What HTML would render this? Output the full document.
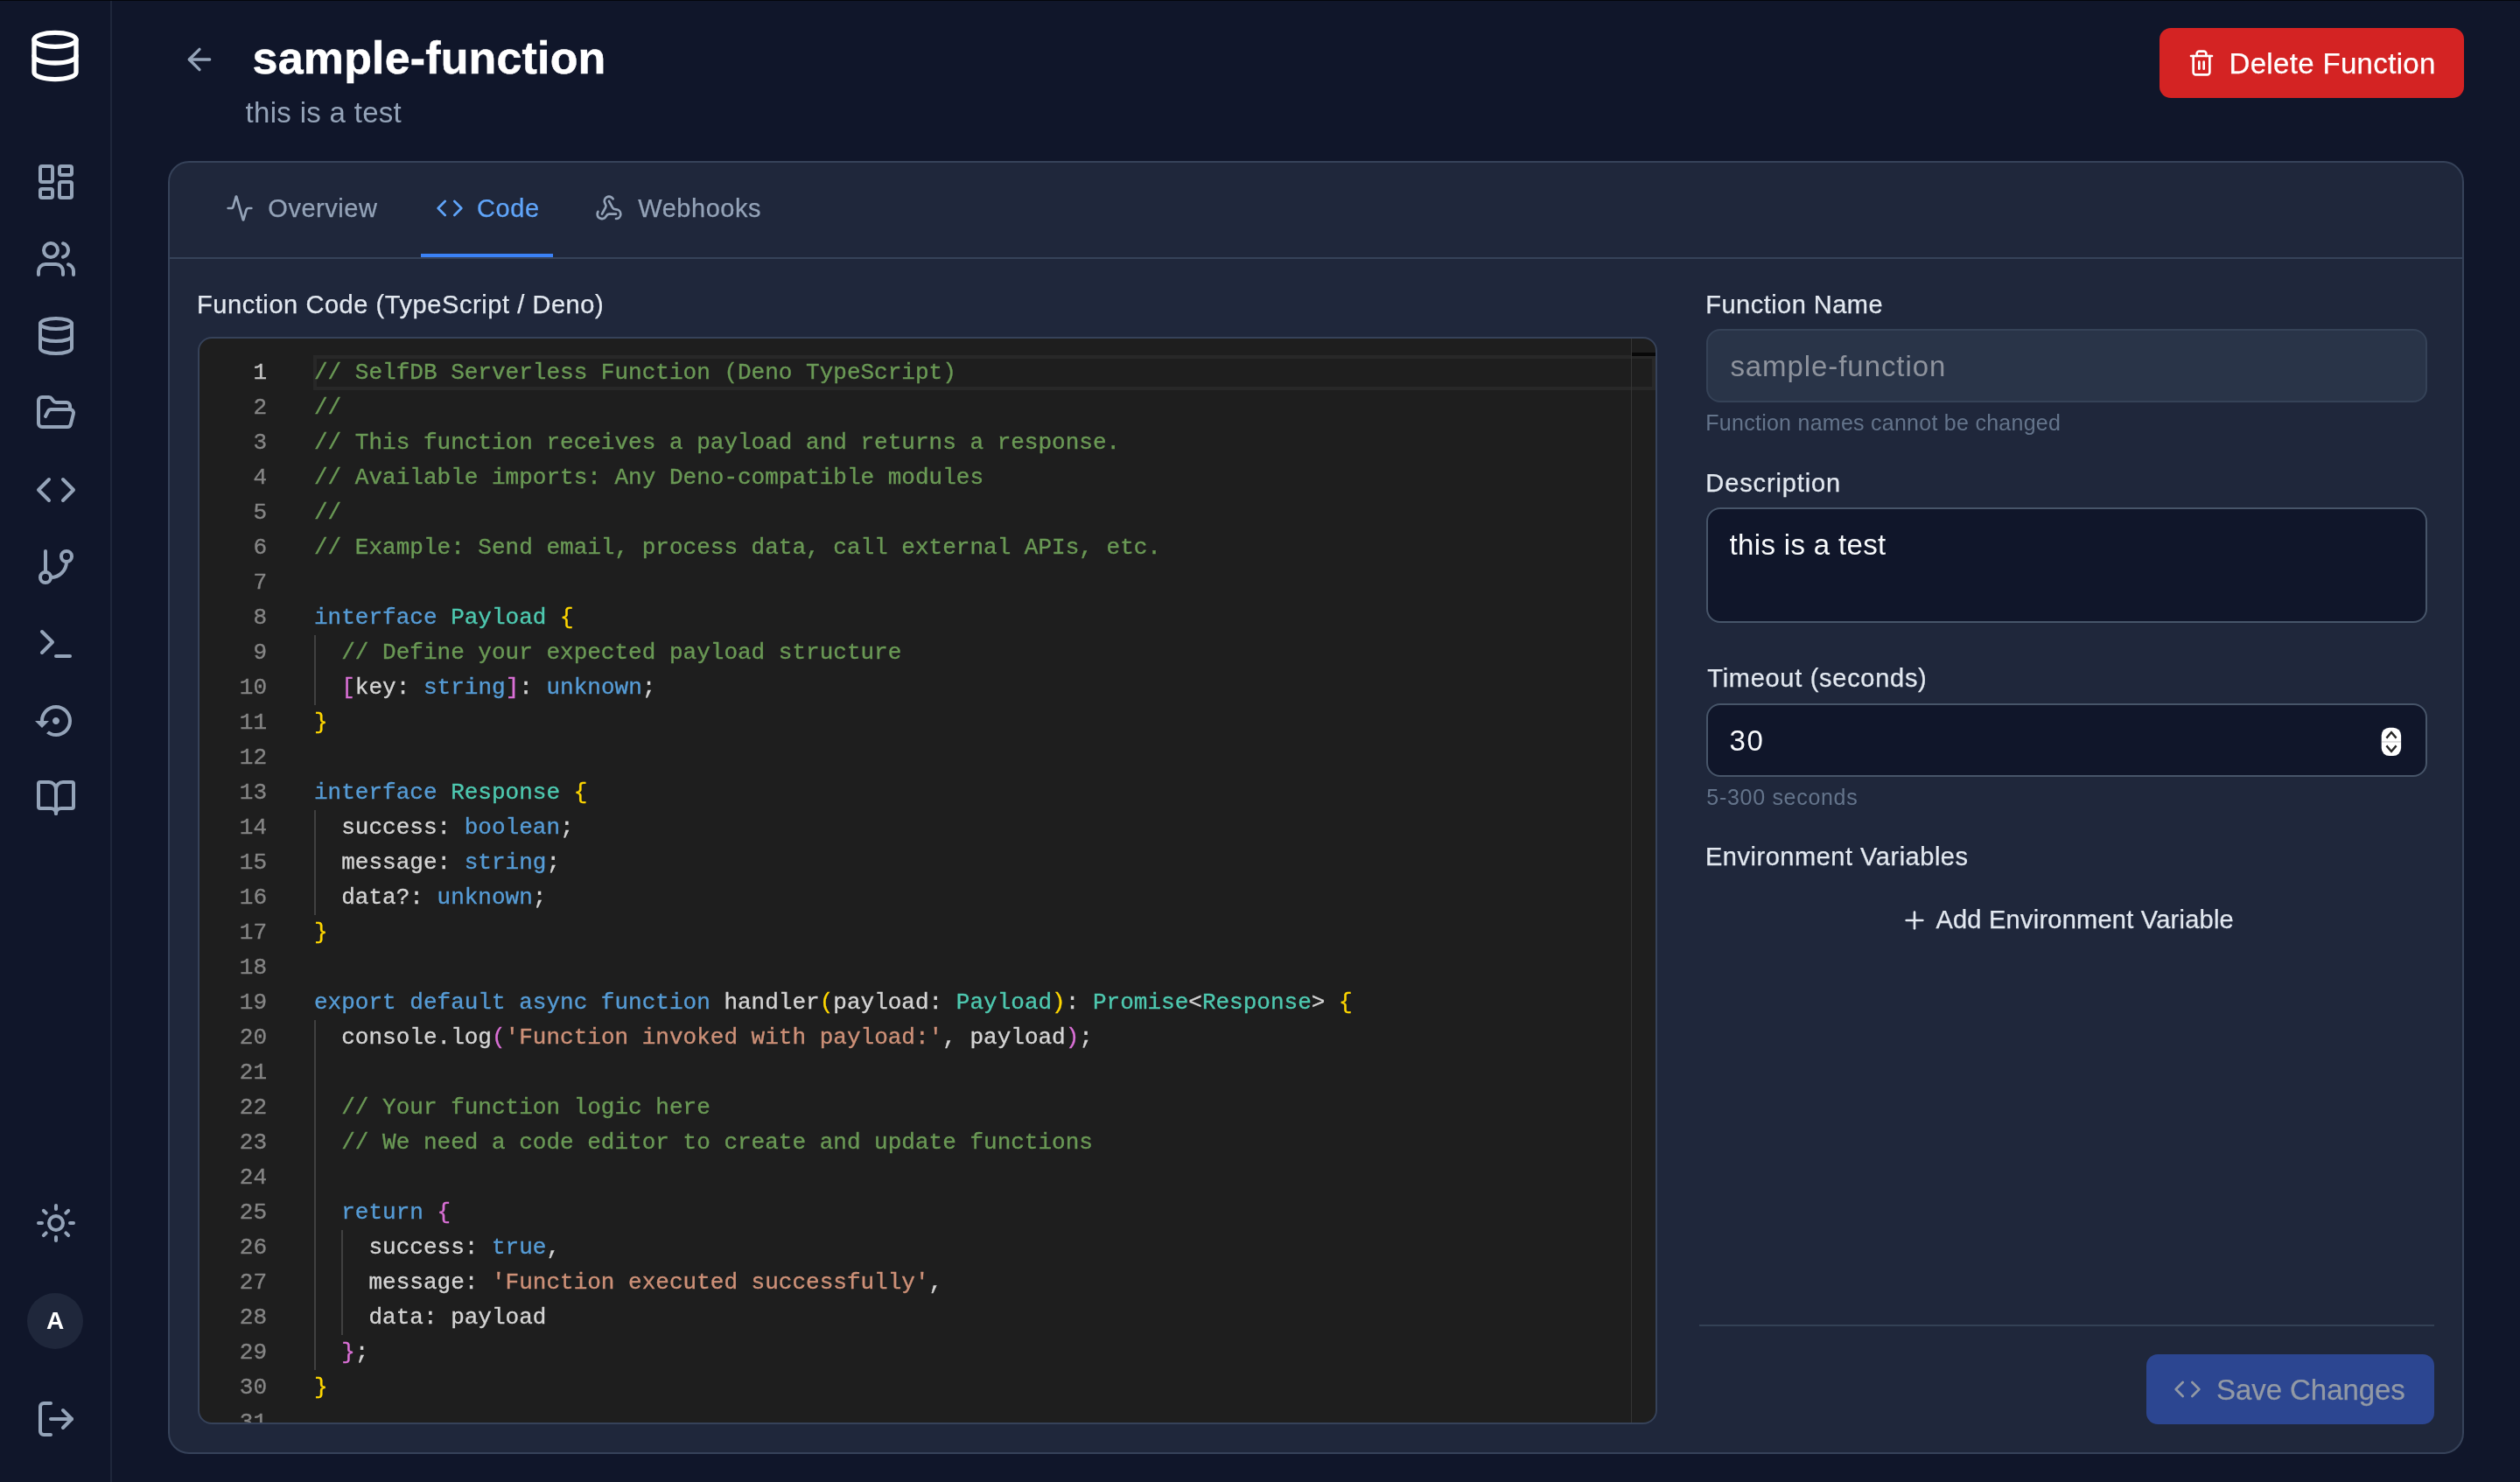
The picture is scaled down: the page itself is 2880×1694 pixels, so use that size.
<!DOCTYPE html>
<html><head><meta charset="utf-8"><title>sample-function</title>
<style>
*{box-sizing:border-box;margin:0;padding:0}
html,body{width:2880px;height:1694px;overflow:hidden;background:#10162a}
body{position:relative;font-family:"Liberation Sans",sans-serif;color:#e2e8f0}
.abs{position:absolute}
.t{position:absolute;white-space:nowrap;line-height:1}
#root{position:absolute;left:0;top:0;width:2880px;height:1694px;will-change:transform}
#topline{position:absolute;left:0;top:0;width:2880px;height:1px;background:#04060c}
#sidebar{position:absolute;left:0;top:0;width:128px;height:1694px;border-right:2px solid #1f273b}
.avatar{position:absolute;left:31px;top:1478px;width:64px;height:64px;border-radius:50%;background:#1f273b;color:#fff;
  font-weight:bold;font-size:28px;line-height:64px;text-align:center}
#card{position:absolute;left:192px;top:184px;width:2624px;height:1478px;border:2px solid #364259;border-radius:24px;background:#1f273b}
#tabline{position:absolute;left:194px;top:294px;width:2620px;height:2px;background:#364259}
#tabul{position:absolute;left:481px;top:290px;width:151px;height:4px;background:#3b82f6}
.tab{font-size:28px;color:#94a3b8;font-weight:500}
#del{position:absolute;left:2468px;top:32px;width:348px;height:80px;border-radius:13px;background:#d42323}
#save{position:absolute;left:2453px;top:1548px;width:329px;height:80px;border-radius:13px;background:#2c4691}
.lbl{font-size:28px;color:#e2e8f0}
.hint{font-size:24px;color:#64748b}
.inp{position:absolute;left:1950px;width:824px;border:2px solid #475569;border-radius:16px;background:#10162a}
#editor{position:absolute;left:226px;top:385px;width:1668px;height:1243px;border:2px solid #364259;border-radius:16px;background:#1e1e1e;overflow:hidden}
#lines{position:absolute;left:0;top:19px;width:1664px;height:1240px;font-family:"Liberation Mono",monospace;font-size:26px;letter-spacing:0.01px;-webkit-text-stroke:0.35px currentColor}
.ln{position:absolute;left:0;width:77px;text-align:right;line-height:40px;height:40px;color:#858585;white-space:pre}
.ln.a{color:#c6c6c6}
.cl{position:absolute;left:131px;line-height:40px;height:40px;white-space:pre;color:#d4d4d4}
.c{color:#6a9955}.k{color:#569cd6}.t2{color:#4ec9b0}.s{color:#ce9178}.p{color:#d4d4d4}
.cl .t{position:static;color:#4ec9b0}
.b1{color:#ffd700}.b2{color:#da70d6}
.guide{position:absolute;width:2px;background:#404040}
</style></head>
<body>
<div id="root">
<div id="sidebar">
<svg style="position:absolute;left:31px;top:32px;" width="64" height="64" viewBox="0 0 24 24" fill="none" stroke="#ffffff" stroke-width="2" stroke-linecap="round" stroke-linejoin="round"><ellipse cx="12" cy="5" rx="9" ry="3"/><path d="M3 5V19A9 3 0 0 0 21 19V5"/><path d="M3 12A9 3 0 0 0 21 12"/></svg><svg style="position:absolute;left:40px;top:184px;" width="48" height="48" viewBox="0 0 24 24" fill="none" stroke="#94a3b8" stroke-width="2" stroke-linecap="round" stroke-linejoin="round"><rect width="7" height="9" x="3" y="3" rx="1"/><rect width="7" height="5" x="14" y="3" rx="1"/><rect width="7" height="9" x="14" y="12" rx="1"/><rect width="7" height="5" x="3" y="16" rx="1"/></svg><svg style="position:absolute;left:40px;top:272px;" width="48" height="48" viewBox="0 0 24 24" fill="none" stroke="#94a3b8" stroke-width="2" stroke-linecap="round" stroke-linejoin="round"><path d="M16 21v-2a4 4 0 0 0-4-4H6a4 4 0 0 0-4 4v2"/><circle cx="9" cy="7" r="4"/><path d="M22 21v-2a4 4 0 0 0-3-3.87"/><path d="M16 3.13a4 4 0 0 1 0 7.75"/></svg><svg style="position:absolute;left:40px;top:360px;" width="48" height="48" viewBox="0 0 24 24" fill="none" stroke="#94a3b8" stroke-width="2" stroke-linecap="round" stroke-linejoin="round"><ellipse cx="12" cy="5" rx="9" ry="3"/><path d="M3 5V19A9 3 0 0 0 21 19V5"/><path d="M3 12A9 3 0 0 0 21 12"/></svg><svg style="position:absolute;left:40px;top:448px;" width="48" height="48" viewBox="0 0 24 24" fill="none" stroke="#94a3b8" stroke-width="2" stroke-linecap="round" stroke-linejoin="round"><path d="m6 14 1.5-2.9A2 2 0 0 1 9.24 10H20a2 2 0 0 1 1.94 2.5l-1.54 6a2 2 0 0 1-1.95 1.5H4a2 2 0 0 1-2-2V5a2 2 0 0 1 2-2h3.9a2 2 0 0 1 1.69.9l.81 1.2a2 2 0 0 0 1.67.9H18a2 2 0 0 1 2 2v2"/></svg><svg style="position:absolute;left:40px;top:536px;" width="48" height="48" viewBox="0 0 24 24" fill="none" stroke="#94a3b8" stroke-width="2" stroke-linecap="round" stroke-linejoin="round"><polyline points="16 18 22 12 16 6"/><polyline points="8 6 2 12 8 18"/></svg><svg style="position:absolute;left:40px;top:624px;" width="48" height="48" viewBox="0 0 24 24" fill="none" stroke="#94a3b8" stroke-width="2" stroke-linecap="round" stroke-linejoin="round"><line x1="6" x2="6" y1="3" y2="15"/><circle cx="18" cy="6" r="3"/><circle cx="6" cy="18" r="3"/><path d="M18 9a9 9 0 0 1-9 9"/></svg><svg style="position:absolute;left:40px;top:712px;" width="48" height="48" viewBox="0 0 24 24" fill="none" stroke="#94a3b8" stroke-width="2" stroke-linecap="round" stroke-linejoin="round"><polyline points="4 17 10 11 4 5"/><line x1="12" x2="20" y1="19" y2="19"/></svg><svg style="position:absolute;left:40px;top:800px" width="48" height="48" viewBox="0 0 24 24" fill="#94a3b8"><path d="M14 12c0-1.1-.9-2-2-2s-2 .9-2 2 .9 2 2 2 2-.9 2-2zm-2-9c-4.97 0-9 4.03-9 9H0l4 4 4-4H5c0-3.87 3.13-7 7-7s7 3.13 7 7-3.13 7-7 7c-1.51 0-2.91-.49-4.06-1.3l-1.42 1.44C8.04 20.3 9.94 21 12 21c4.97 0 9-4.03 9-9s-4.03-9-9-9z"/></svg><svg style="position:absolute;left:40px;top:888px;" width="48" height="48" viewBox="0 0 24 24" fill="none" stroke="#94a3b8" stroke-width="2" stroke-linecap="round" stroke-linejoin="round"><path d="M12 7v14"/><path d="M3 18a1 1 0 0 1-1-1V4a1 1 0 0 1 1-1h5a4 4 0 0 1 4 4 4 4 0 0 1 4-4h5a1 1 0 0 1 1 1v13a1 1 0 0 1-1 1h-6a3 3 0 0 0-3 3 3 3 0 0 0-3-3z"/></svg><svg style="position:absolute;left:40px;top:1374px;" width="48" height="48" viewBox="0 0 24 24" fill="none" stroke="#94a3b8" stroke-width="2" stroke-linecap="round" stroke-linejoin="round"><circle cx="12" cy="12" r="4"/><path d="M12 2v2"/><path d="M12 20v2"/><path d="m4.93 4.93 1.41 1.41"/><path d="m17.66 17.66 1.41 1.41"/><path d="M2 12h2"/><path d="M20 12h2"/><path d="m6.34 17.66-1.41 1.41"/><path d="m19.07 4.93-1.41 1.41"/></svg><div class="avatar">A</div><svg style="position:absolute;left:40px;top:1598px;" width="48" height="48" viewBox="0 0 24 24" fill="none" stroke="#94a3b8" stroke-width="2" stroke-linecap="round" stroke-linejoin="round"><path d="M9 21H5a2 2 0 0 1-2-2V5a2 2 0 0 1 2-2h4"/><polyline points="16 17 21 12 16 7"/><line x1="21" x2="9" y1="12" y2="12"/></svg>
</div>
<div id="topline"></div>

<svg style="position:absolute;left:208px;top:48px;" width="40" height="40" viewBox="0 0 24 24" fill="none" stroke="#94a3b8" stroke-width="2" stroke-linecap="round" stroke-linejoin="round"><path d="m12 19-7-7 7-7"/><path d="M19 12H5"/></svg>
<div class="t" id="title" style="left:288.60px;top:40.17px;font-size:52px;line-height:52px;letter-spacing:0.156px;font-weight:bold;color:#ffffff;-webkit-text-stroke:0.5px #fff">sample-function</div>
<div class="t" id="subtitle" style="left:280.60px;top:112.26px;font-size:33px;line-height:33px;letter-spacing:0.303px;font-weight:normal;color:#94a3b8">this is a test</div>

<div id="del">
<svg style="position:absolute;left:32px;top:24px;" width="32" height="32" viewBox="0 0 24 24" fill="none" stroke="#fff" stroke-width="2" stroke-linecap="round" stroke-linejoin="round"><path d="M3 6h18"/><path d="M19 6v14c0 1-1 2-2 2H7c-1 0-2-1-2-2V6"/><path d="M8 6V4c0-1 1-2 2-2h4c1 0 2 1 2 2v2"/><line x1="10" x2="10" y1="11" y2="17"/><line x1="14" x2="14" y1="11" y2="17"/></svg>
</div>
<div class="t" id="deltxt" style="left:2547.50px;top:55.86px;font-size:33px;line-height:33px;letter-spacing:0.337px;font-weight:normal;color:#ffffff;-webkit-text-stroke:0.25px currentColor">Delete Function</div>

<div id="card"></div>
<div id="tabline"></div>
<div id="tabul"></div>
<svg style="position:absolute;left:258px;top:222px;" width="32" height="32" viewBox="0 0 24 24" fill="none" stroke="#94a3b8" stroke-width="2" stroke-linecap="round" stroke-linejoin="round"><path d="M22 12h-2.48a2 2 0 0 0-1.93 1.46l-2.35 8.36a.25.25 0 0 1-.48 0L9.24 2.18a.25.25 0 0 0-.48 0l-2.35 8.36A2 2 0 0 1 4.49 12H2"/></svg>
<div class="t" id="tab1" style="left:306.30px;top:224.05px;font-size:29px;line-height:29px;letter-spacing:0.541px;font-weight:normal;color:#94a3b8;-webkit-text-stroke:0.25px currentColor">Overview</div>
<svg style="position:absolute;left:498px;top:222px;" width="32" height="32" viewBox="0 0 24 24" fill="none" stroke="#60a5fa" stroke-width="2" stroke-linecap="round" stroke-linejoin="round"><polyline points="16 18 22 12 16 6"/><polyline points="8 6 2 12 8 18"/></svg>
<div class="t" id="tab2" style="left:544.90px;top:224.05px;font-size:29px;line-height:29px;letter-spacing:0.633px;font-weight:normal;color:#60a5fa;-webkit-text-stroke:0.25px currentColor">Code</div>
<svg style="position:absolute;left:680px;top:222px;" width="32" height="32" viewBox="0 0 24 24" fill="none" stroke="#94a3b8" stroke-width="2" stroke-linecap="round" stroke-linejoin="round"><path d="M18 16.98h-5.99c-1.1 0-1.95.94-2.48 1.9A4 4 0 0 1 2 17c.01-.7.2-1.4.57-2"/><path d="m6 17 3.13-5.78c.53-.97.1-2.18-.5-3.1a4 4 0 1 1 6.89-4.06"/><path d="m12 6 3.13 5.73C15.66 12.7 16.9 13 18 13a4 4 0 0 1 0 8"/></svg>
<div class="t" id="tab3" style="left:729.30px;top:224.05px;font-size:29px;line-height:29px;letter-spacing:0.53px;font-weight:normal;color:#94a3b8;-webkit-text-stroke:0.25px currentColor">Webhooks</div>

<div class="t" id="l0" style="left:225.00px;top:333.75px;font-size:29px;line-height:29px;letter-spacing:0.568px;font-weight:normal;color:#e2e8f0;-webkit-text-stroke:0.25px currentColor">Function Code (TypeScript / Deno)</div>

<div id="editor">
  <div class="abs" style="left:130px;top:19px;width:1534px;height:40px;border:4px solid #282828"></div>
  <div class="guide" style="left:131px;top:339px;height:80px"></div>
  <div class="guide" style="left:131px;top:539px;height:120px"></div>
  <div class="guide" style="left:131px;top:779px;height:400px"></div>
  <div class="guide" style="left:162px;top:1019px;height:120px"></div>
  <div id="lines">
<div class="ln a" style="top:0px">1</div>
<div class="cl" style="top:0px"><span class="c">// SelfDB Serverless Function (Deno TypeScript)</span></div>
<div class="ln" style="top:40px">2</div>
<div class="cl" style="top:40px"><span class="c">//</span></div>
<div class="ln" style="top:80px">3</div>
<div class="cl" style="top:80px"><span class="c">// This function receives a payload and returns a response.</span></div>
<div class="ln" style="top:120px">4</div>
<div class="cl" style="top:120px"><span class="c">// Available imports: Any Deno-compatible modules</span></div>
<div class="ln" style="top:160px">5</div>
<div class="cl" style="top:160px"><span class="c">//</span></div>
<div class="ln" style="top:200px">6</div>
<div class="cl" style="top:200px"><span class="c">// Example: Send email, process data, call external APIs, etc.</span></div>
<div class="ln" style="top:240px">7</div>
<div class="cl" style="top:240px"></div>
<div class="ln" style="top:280px">8</div>
<div class="cl" style="top:280px"><span class="k">interface</span><span class="p"> </span><span class="t">Payload</span><span class="p"> </span><span class="b1">{</span></div>
<div class="ln" style="top:320px">9</div>
<div class="cl" style="top:320px"><span class="p">  </span><span class="c">// Define your expected payload structure</span></div>
<div class="ln" style="top:360px">10</div>
<div class="cl" style="top:360px"><span class="p">  </span><span class="b2">[</span><span class="p">key: </span><span class="k">string</span><span class="b2">]</span><span class="p">: </span><span class="k">unknown</span><span class="p">;</span></div>
<div class="ln" style="top:400px">11</div>
<div class="cl" style="top:400px"><span class="b1">}</span></div>
<div class="ln" style="top:440px">12</div>
<div class="cl" style="top:440px"></div>
<div class="ln" style="top:480px">13</div>
<div class="cl" style="top:480px"><span class="k">interface</span><span class="p"> </span><span class="t">Response</span><span class="p"> </span><span class="b1">{</span></div>
<div class="ln" style="top:520px">14</div>
<div class="cl" style="top:520px"><span class="p">  success: </span><span class="k">boolean</span><span class="p">;</span></div>
<div class="ln" style="top:560px">15</div>
<div class="cl" style="top:560px"><span class="p">  message: </span><span class="k">string</span><span class="p">;</span></div>
<div class="ln" style="top:600px">16</div>
<div class="cl" style="top:600px"><span class="p">  data?: </span><span class="k">unknown</span><span class="p">;</span></div>
<div class="ln" style="top:640px">17</div>
<div class="cl" style="top:640px"><span class="b1">}</span></div>
<div class="ln" style="top:680px">18</div>
<div class="cl" style="top:680px"></div>
<div class="ln" style="top:720px">19</div>
<div class="cl" style="top:720px"><span class="k">export default async function</span><span class="p"> handler</span><span class="b1">(</span><span class="p">payload: </span><span class="t">Payload</span><span class="b1">)</span><span class="p">: </span><span class="t">Promise</span><span class="p">&lt;</span><span class="t">Response</span><span class="p">&gt; </span><span class="b1">{</span></div>
<div class="ln" style="top:760px">20</div>
<div class="cl" style="top:760px"><span class="p">  console.log</span><span class="b2">(</span><span class="s">&#x27;Function invoked with payload:&#x27;</span><span class="p">, payload</span><span class="b2">)</span><span class="p">;</span></div>
<div class="ln" style="top:800px">21</div>
<div class="cl" style="top:800px"></div>
<div class="ln" style="top:840px">22</div>
<div class="cl" style="top:840px"><span class="p">  </span><span class="c">// Your function logic here</span></div>
<div class="ln" style="top:880px">23</div>
<div class="cl" style="top:880px"><span class="p">  </span><span class="c">// We need a code editor to create and update functions</span></div>
<div class="ln" style="top:920px">24</div>
<div class="cl" style="top:920px"></div>
<div class="ln" style="top:960px">25</div>
<div class="cl" style="top:960px"><span class="p">  </span><span class="k">return</span><span class="p"> </span><span class="b2">{</span></div>
<div class="ln" style="top:1000px">26</div>
<div class="cl" style="top:1000px"><span class="p">    success: </span><span class="k">true</span><span class="p">,</span></div>
<div class="ln" style="top:1040px">27</div>
<div class="cl" style="top:1040px"><span class="p">    message: </span><span class="s">&#x27;Function executed successfully&#x27;</span><span class="p">,</span></div>
<div class="ln" style="top:1080px">28</div>
<div class="cl" style="top:1080px"><span class="p">    data: payload</span></div>
<div class="ln" style="top:1120px">29</div>
<div class="cl" style="top:1120px"><span class="p">  </span><span class="b2">}</span><span class="p">;</span></div>
<div class="ln" style="top:1160px">30</div>
<div class="cl" style="top:1160px"><span class="b1">}</span></div>
<div class="ln" style="top:1200px">31</div>
<div class="cl" style="top:1200px"></div>
  </div>
  <div class="abs" style="left:1636px;top:0;width:1px;height:1243px;background:#353535"></div>
  <div class="abs" style="left:1637px;top:16px;width:29px;height:4px;background:#080808"></div>
</div>

<div class="t" id="l1" style="left:1949.30px;top:333.75px;font-size:29px;line-height:29px;letter-spacing:0.474px;font-weight:normal;color:#e2e8f0;-webkit-text-stroke:0.25px currentColor">Function Name</div>
<div class="inp" style="top:376px;height:84px;background:#293448;border-color:#354257"></div>
<div class="t" id="v1" style="left:1977.40px;top:402.16px;font-size:33px;line-height:33px;letter-spacing:0.929px;font-weight:normal;color:#8e939d">sample-function</div>
<div class="t" id="h1" style="left:1949.30px;top:470.93px;font-size:25px;line-height:25px;letter-spacing:0.261px;font-weight:normal;color:#64748b">Function names cannot be changed</div>

<div class="t" id="l2" style="left:1949.30px;top:537.85px;font-size:29px;line-height:29px;letter-spacing:0.887px;font-weight:normal;color:#e2e8f0;-webkit-text-stroke:0.25px currentColor">Description</div>
<div class="inp" style="top:580px;height:132px"></div>
<div class="t" id="v2" style="left:1976.50px;top:606.16px;font-size:33px;line-height:33px;letter-spacing:0.341px;font-weight:normal;color:#f8fafc">this is a test</div>

<div class="t" id="l3" style="left:1951.30px;top:761.05px;font-size:29px;line-height:29px;letter-spacing:0.712px;font-weight:normal;color:#e2e8f0;-webkit-text-stroke:0.25px currentColor">Timeout (seconds)</div>
<div class="inp" style="top:804px;height:84px"></div>
<div class="t" id="v3" style="left:1976.40px;top:829.76px;font-size:33px;line-height:33px;letter-spacing:1.747px;font-weight:normal;color:#f8fafc">30</div>
<svg class="abs" style="left:2721px;top:831px" width="24" height="34" viewBox="0 0 24 34"><rect x="0.7" y="0.7" width="22.4" height="32.4" rx="9" fill="#fff"/><rect x="1" y="16.2" width="21.8" height="1.5" fill="#d4d4d4"/><path d="M6.4 12.6 L12 6 L17.6 12.6" fill="none" stroke="#262626" stroke-width="2.4"/><path d="M6.4 21.4 L12 28 L17.6 21.4" fill="none" stroke="#262626" stroke-width="2.4"/></svg>
<div class="t" id="h3" style="left:1950.30px;top:898.63px;font-size:25px;line-height:25px;letter-spacing:0.7px;font-weight:normal;color:#64748b">5-300 seconds</div>

<div class="t" id="l4" style="left:1949.00px;top:965.25px;font-size:29px;line-height:29px;letter-spacing:0.52px;font-weight:normal;color:#e2e8f0;-webkit-text-stroke:0.25px currentColor">Environment Variables</div>
<svg style="position:absolute;left:2172px;top:1036px;" width="32" height="32" viewBox="0 0 24 24" fill="none" stroke="#e2e8f0" stroke-width="2" stroke-linecap="round" stroke-linejoin="round"><path d="M5 12h14"/><path d="M12 5v14"/></svg>
<div class="t" id="addenv" style="left:2212.40px;top:1037.25px;font-size:29px;line-height:29px;letter-spacing:0.242px;font-weight:normal;color:#e2e8f0;-webkit-text-stroke:0.25px currentColor">Add Environment Variable</div>

<div class="abs" style="left:1942px;top:1514px;width:840px;height:2px;background:#334155"></div>
<div id="save">
<svg style="position:absolute;left:31px;top:24px;" width="32" height="32" viewBox="0 0 24 24" fill="none" stroke="#9299a5" stroke-width="2" stroke-linecap="round" stroke-linejoin="round"><polyline points="16 18 22 12 16 6"/><polyline points="8 6 2 12 8 18"/></svg>
</div>
<div class="t" id="savetxt" style="left:2533.00px;top:1571.76px;font-size:33px;line-height:33px;letter-spacing:-0.062px;font-weight:normal;color:#9299a5;-webkit-text-stroke:0.25px currentColor">Save Changes</div>
</div>
</body></html>
